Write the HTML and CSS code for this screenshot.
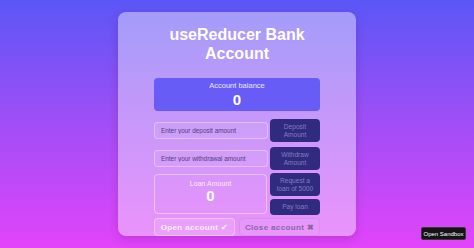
FILE: index.html
```html
<!DOCTYPE html>
<html lang="en">
<head>
<meta charset="utf-8">
<title>useReducer Bank Account</title>
<link rel="stylesheet" href="styles.css">
</head>
<body>
<main class="card">
  <h1 class="title">useReducer Bank<br>Account</h1>
  <section class="balance">
    <div class="balance-label">Account balance</div>
    <div class="balance-value">0</div>
  </section>
  <div class="row first">
    <input class="field" type="text" placeholder="Enter your deposit amount">
    <button class="dark-btn">Deposit<br>Amount</button>
  </div>
  <div class="row">
    <input class="field" type="text" placeholder="Enter your withdrawal amount">
    <button class="dark-btn">Withdraw<br>Amount</button>
  </div>
  <div class="loan-row">
    <div class="loan-box">
      <div class="loan-label">Loan Amount</div>
      <div class="loan-value">0</div>
    </div>
    <div class="loan-actions">
      <button class="dark-btn">Request a<br>loan of 5000</button>
      <button class="dark-btn small">Pay loan</button>
    </div>
  </div>
  <div class="account-row">
    <button class="acct-btn open">Open account ✔</button>
    <button class="acct-btn close">Close account ✖</button>
  </div>
</main>
<button class="sandbox">Open Sandbox</button>
</body>
</html>
```

FILE: styles.css
```css
html, body {
  margin: 0;
  height: 100%;
}
body {
  background: linear-gradient(180deg, #5b56f6 0%, #9a4ff6 45%, #e244fa 100%);
  font-family: "Liberation Sans", Arial, sans-serif;
  overflow: hidden;
}
.card {
  box-sizing: border-box;
  width: 238px;
  height: 224px;
  margin: 12px auto 0;
  padding: 13px 36px 0;
  border-radius: 8px;
  background: rgba(255, 255, 255, 0.42);
  box-shadow: 0 3px 10px rgba(60, 0, 90, 0.18);
  display: flex;
  flex-direction: column;
}
.title {
  margin: 0 0 15px;
  font-size: 16px;
  line-height: 19px;
  font-weight: bold;
  color: #ffffff;
  text-align: center;
}
.balance {
  height: 34px;
  box-sizing: border-box;
  padding-top: 3px;
  border-radius: 4px;
  background: #685cf6;
  color: #ffffff;
  text-align: center;
}
.balance-label {
  font-size: 7.5px;
  line-height: 10px;
  color: #ece8ff;
}
.balance-value {
  font-size: 15px;
  line-height: 17px;
  font-weight: bold;
}
.row {
  display: flex;
  align-items: center;
  gap: 2px;
  margin-top: 5px;
}
.row.first {
  margin-top: 8px;
}
.field {
  flex: 1;
  min-width: 0;
  height: 17px;
  box-sizing: border-box;
  padding: 0 6px;
  border: 1px solid rgba(255, 255, 255, 0.35);
  border-radius: 4px;
  background: rgba(255, 255, 255, 0.06);
  font-family: inherit;
  font-size: 6.4px;
  color: #4a3d74;
  outline: none;
}
.field::placeholder {
  color: #4f4278;
}
.dark-btn {
  width: 50px;
  height: 23px;
  flex: none;
  padding: 0;
  border: none;
  border-radius: 4px;
  background: #302b7e;
  font-family: inherit;
  font-size: 6.6px;
  line-height: 8px;
  color: #837cc0;
}
.dark-btn.small {
  height: 16px;
}
.loan-row {
  display: flex;
  align-items: center;
  gap: 3px;
  margin-top: 3px;
}
.loan-box {
  width: 113px;
  height: 40px;
  box-sizing: border-box;
  padding-top: 4px;
  border: 1px solid rgba(255, 255, 255, 0.4);
  border-radius: 4px;
  text-align: center;
  color: #ffffff;
}
.loan-label {
  font-size: 7px;
  line-height: 9px;
  color: #fbeaff;
}
.loan-value {
  font-size: 15px;
  line-height: 16px;
  font-weight: bold;
}
.loan-actions {
  display: flex;
  flex-direction: column;
  gap: 3px;
}
.account-row {
  display: flex;
  gap: 4px;
  margin-top: 3px;
}
.acct-btn {
  flex: 1;
  height: 18px;
  padding: 0;
  border: 1px solid rgba(255, 255, 255, 0.35);
  border-radius: 4px;
  font-family: inherit;
  font-size: 8px;
  font-weight: bold;
  letter-spacing: 0.35px;
}
.acct-btn.open {
  background: rgba(255, 255, 255, 0.12);
  color: rgba(255, 255, 255, 0.85);
}
.acct-btn.close {
  background: rgba(255, 255, 255, 0.04);
  border-color: rgba(200, 140, 210, 0.5);
  color: #8a66a6;
}
.sandbox {
  position: absolute;
  right: 8px;
  bottom: 8px;
  width: 45px;
  height: 13px;
  padding: 0;
  border: 1px solid #3a3a3a;
  border-radius: 2px;
  background: #141414;
  color: #ffffff;
  font-family: inherit;
  font-size: 6px;
}
```
